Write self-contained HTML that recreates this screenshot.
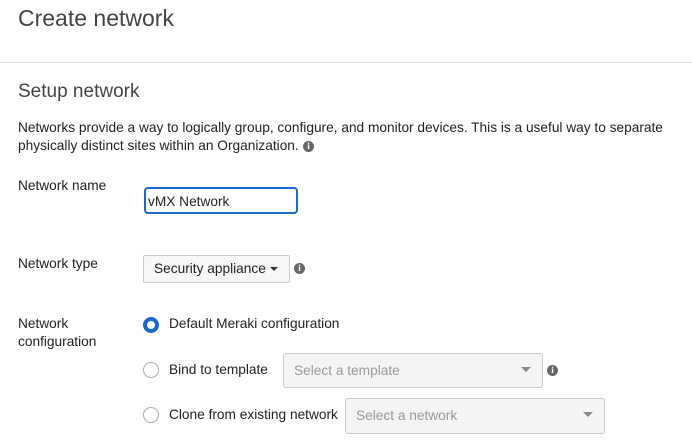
<!DOCTYPE html>
<html><head><style>
body{margin:0;width:692px;height:447px;background:#fff;font-family:"Liberation Sans",sans-serif;color:#222;position:relative;overflow:hidden}
.a{position:absolute;white-space:nowrap}
.t{font-size:13.7px}
.info{position:absolute;width:11px;height:11px;border-radius:50%;background:#666;color:#fff;font:bold 9px/11px "Liberation Serif",serif;text-align:center}
.radio{position:absolute;width:14px;height:14px;border:1px solid #aaa;border-radius:50%;background:#fff}
.sel{position:absolute;border:1px solid #ccc;border-radius:3px;background:#f4f4f4;color:#999;font-size:13.7px;box-sizing:border-box;padding-left:10px}
.car{position:absolute;width:0;height:0;border-left:5px solid transparent;border-right:5px solid transparent;border-top:5px solid #888}
</style></head><body>
<div class="a" style="left:18px;top:5px;font-size:23px;font-weight:300;color:#444">Create network</div>
<div class="a" style="left:0;top:62px;width:692px;height:1px;background:#e2e2e2"></div>
<div class="a" style="left:18px;top:81px;font-size:19px;color:#444">Setup network</div>
<div class="a t" style="left:18px;top:120px">Networks provide a way to logically group, configure, and monitor devices. This is a useful way to separate</div>
<div class="a t" style="left:18px;top:138px">physically distinct sites within an Organization.</div>
<div class="info" style="left:303px;top:141px">i</div>
<div class="a t" style="left:18px;top:178px">Network name</div>
<div class="a t" style="left:144px;top:187px;width:154px;height:27px;box-sizing:border-box;border:2px solid #1b6ac9;border-radius:4px;padding:5px 0 0 2px">vMX Network</div>
<div class="a t" style="left:18px;top:256px">Network type</div>
<div class="a t" style="left:143px;top:255px;width:147px;height:28px;box-sizing:border-box;border:1px solid #ccc;border-radius:2px;background:#f7f7f7;padding:5px 0 0 10px">Security appliance</div>
<div class="car" style="left:270px;top:267px;border-top-color:#333;border-left-width:4px;border-right-width:4px;border-top-width:4px"></div>
<div class="info" style="left:294px;top:263px">i</div>
<div class="a t" style="left:18px;top:316px">Network</div>
<div class="a t" style="left:18px;top:334px">configuration</div>
<div class="radio" style="left:143px;top:317px;border:4px solid #1b6ac9;width:8px;height:8px"></div>
<div class="a t" style="left:169px;top:316px">Default Meraki configuration</div>
<div class="radio" style="left:143px;top:362px"></div>
<div class="a t" style="left:169px;top:362px">Bind to template</div>
<div class="sel" style="left:283px;top:353px;width:260px;height:35px;padding-top:9px">Select a template</div>
<div class="car" style="left:521px;top:367px"></div>
<div class="info" style="left:547px;top:365px">i</div>
<div class="radio" style="left:143px;top:407px"></div>
<div class="a t" style="left:169px;top:407px">Clone from existing network</div>
<div class="sel" style="left:345px;top:398px;width:260px;height:36px;padding-top:9px">Select a network</div>
<div class="car" style="left:583px;top:412px"></div>
</body></html>
